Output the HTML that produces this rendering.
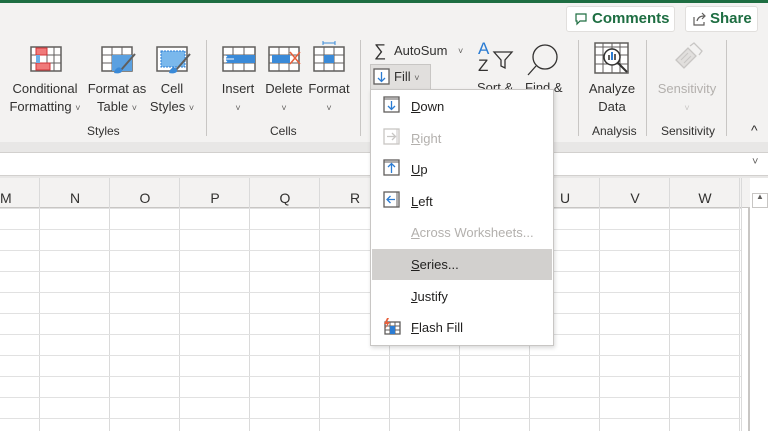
<!DOCTYPE html>
<html><head><style>
*{margin:0;padding:0;box-sizing:border-box}
body{width:768px;height:431px;overflow:hidden;background:#fff;font-family:"Liberation Sans",sans-serif;font-size:13px;color:#323130;position:relative}
.a{position:absolute}
.t{position:absolute;white-space:nowrap;font-size:13px;color:#323130}
.c{text-align:center}
.sep{position:absolute;width:1px;background:#c8c6c4;top:40px;height:96px}
.gl{position:absolute;top:124px;font-size:12px;color:#323130;white-space:nowrap}
.ch{position:absolute;top:190px;font-size:14px;color:#323130;width:70px;text-align:center}
.mi{position:absolute;left:411px;font-size:13px;color:#201f1e}
.dis{color:#b3b0ad}
.v{font-size:9px;color:#605e5c}
u{text-decoration:underline}
</style></head><body>
<div class="a" style="left:0;top:0;width:768px;height:3px;background:#1e6e42"></div>
<div class="a" style="left:0;top:3px;width:768px;height:139px;background:#f3f2f1"></div>
<div class="a" style="left:566px;top:6px;width:109px;height:26px;background:#fff;border:1px solid #e1dfdd;border-radius:3px"></div>
<svg class="a" style="left:574px;top:12px" width="14" height="14"><path d="M2 2h10v7H6l-3 3V9H2z" fill="none" stroke="#1e6e42" stroke-width="1.2"/></svg>
<div class="t" style="left:592px;top:10px;font-size:15px;font-weight:bold;color:#1e6e42">Comments</div>
<div class="a" style="left:685px;top:6px;width:73px;height:26px;background:#fff;border:1px solid #e1dfdd;border-radius:3px"></div>
<svg class="a" style="left:692px;top:12px" width="15" height="14"><path d="M2 5v8h10v-3M5 9c1-4 4-5 7-5M10 1l3 3-3 3" fill="none" stroke="#605e5c" stroke-width="1.2"/></svg>
<div class="t" style="left:710px;top:10px;font-size:15px;font-weight:bold;color:#1e6e42">Share</div>
<svg class="a" style="left:30px;top:46px" width="34" height="28"><rect x="1" y="1" width="30" height="24" fill="#fff" stroke="#605e5c" stroke-width="1.5"/><path d="M1 9h30M1 17h30M9 1v24M17 1v24M24 1v24" stroke="#605e5c"/><rect x="6" y="2" width="11" height="7" fill="#f07a7a" stroke="#d13438"/><rect x="6" y="17" width="14" height="7" fill="#f07a7a" stroke="#d13438"/><rect x="6" y="9" width="4" height="8" fill="#6cb0e8"/></svg>
<svg class="a" style="left:101px;top:46px" width="36" height="32"><rect x="1" y="1" width="30" height="24" fill="#fff" stroke="#605e5c" stroke-width="1.5"/><path d="M1 9h30M1 17h30M11 1v24M21 1v24" stroke="#605e5c"/><rect x="11" y="9" width="20" height="16" fill="#5aa0e0"/><path d="M34 8L20 24" stroke="#605e5c" stroke-width="2"/><path d="M14 24c3-4 6-3 7 0s-4 4-8 3z" fill="#3a8ad8"/></svg>
<svg class="a" style="left:156px;top:46px" width="36" height="32"><rect x="1" y="1" width="30" height="24" fill="#fff" stroke="#605e5c" stroke-width="1.5"/><rect x="5" y="5" width="24" height="16" fill="#7ab8ec" stroke="#2b7cd3" stroke-dasharray="2 1"/><path d="M34 8L20 24" stroke="#605e5c" stroke-width="2"/><path d="M14 24c3-4 6-3 7 0s-4 4-8 3z" fill="#3a8ad8"/></svg>
<div class="t c" style="left:5px;top:80px;width:80px;line-height:18px">Conditional<br>Formatting <span class="v">˅</span></div>
<div class="t c" style="left:86px;top:80px;width:62px;line-height:18px">Format as<br>Table <span class="v">˅</span></div>
<div class="t c" style="left:148px;top:80px;width:48px;line-height:18px">Cell<br>Styles <span class="v">˅</span></div>
<div class="gl" style="left:87px">Styles</div>
<div class="sep" style="left:206px"></div>
<svg class="a" style="left:222px;top:46px" width="36" height="28"><rect x="1" y="1" width="32" height="24" fill="#fff" stroke="#605e5c" stroke-width="1.5"/><path d="M1 9h32M1 17h32M11 1v24M22 1v24" stroke="#605e5c"/><rect x="4" y="9" width="29" height="8" fill="#3a8ad8"/><path d="M12 13H2M5 10l-3 3 3 3" stroke="#fff" fill="none"/></svg>
<svg class="a" style="left:268px;top:46px" width="36" height="28"><rect x="1" y="1" width="30" height="24" fill="#fff" stroke="#605e5c" stroke-width="1.5"/><path d="M1 9h30M1 17h30M11 1v24M21 1v24" stroke="#605e5c"/><rect x="4" y="9" width="18" height="8" fill="#3a8ad8"/><path d="M22 6l10 12M32 6L22 18" stroke="#e8603c" stroke-width="1.5"/></svg>
<svg class="a" style="left:313px;top:41px" width="34" height="33"><path d="M10 2h12M10 0v4M22 0v4" stroke="#3a8ad8"/><rect x="1" y="6" width="30" height="24" fill="#fff" stroke="#605e5c" stroke-width="1.5"/><path d="M1 14h30M1 22h30M11 6v24M21 6v24" stroke="#605e5c"/><rect x="11" y="14" width="10" height="8" fill="#3a8ad8"/></svg>
<div class="t c" style="left:218px;top:80px;width:40px;line-height:18px">Insert<br><span class="v">˅</span></div>
<div class="t c" style="left:262px;top:80px;width:44px;line-height:18px">Delete<br><span class="v">˅</span></div>
<div class="t c" style="left:306px;top:80px;width:46px;line-height:18px">Format<br><span class="v">˅</span></div>
<div class="gl" style="left:270px">Cells</div>
<div class="sep" style="left:360px"></div>
<div class="t" style="left:374px;top:41px;font-size:17px">∑</div>
<div class="t" style="left:394px;top:43px">AutoSum</div>
<div class="t v" style="left:458px;top:46px">˅</div>
<div class="a" style="left:370px;top:64px;width:61px;height:26px;background:#e1dfdd;border:1px solid #c8c6c4"></div>
<svg class="a" style="left:373px;top:68px" width="18" height="18"><rect x="1" y="1" width="15" height="15" fill="#fff" stroke="#605e5c" stroke-width="1.3"/><path d="M8.5 4v9M5 10l3.5 3.5L12 10" stroke="#2b7cd3" fill="none" stroke-width="1.3"/></svg>
<div class="t" style="left:394px;top:69px">Fill <span class="v">˅</span></div>
<div class="t" style="left:478px;top:40px;font-size:17px;color:#2b7cd3;line-height:17px">A</div>
<div class="t" style="left:478px;top:57px;font-size:17px;line-height:17px">Z</div>
<svg class="a" style="left:492px;top:50px" width="22" height="20"><path d="M2 2h18l-7 8v8l-4-2v-6z" fill="none" stroke="#323130" stroke-width="1.3"/></svg>
<svg class="a" style="left:526px;top:42px" width="38" height="36"><circle cx="19" cy="15" r="12" fill="none" stroke="#323130" stroke-width="1.3"/><path d="M10 24L2 33" stroke="#323130" stroke-width="1.3"/></svg>
<div class="t" style="left:477px;top:80px">Sort &amp;</div>
<div class="t" style="left:525px;top:80px">Find &amp;</div>
<div class="sep" style="left:578px"></div>
<svg class="a" style="left:594px;top:42px" width="38" height="36"><rect x="1" y="1" width="33" height="30" fill="#fff" stroke="#605e5c" stroke-width="1.5"/><path d="M1 5h33M1 13h33M1 22h33M9 1v30M18 1v30M26 1v30" stroke="#605e5c"/><circle cx="18" cy="15" r="8" fill="#fff" stroke="#323130" stroke-width="1.5"/><rect x="14" y="13" width="2" height="5" fill="#605e5c"/><rect x="17" y="10" width="2" height="8" fill="#2b7cd3"/><rect x="20" y="12" width="2" height="6" fill="#605e5c"/><path d="M24 21l9 9" stroke="#323130" stroke-width="2"/></svg>
<div class="t c" style="left:584px;top:80px;width:56px;line-height:18px">Analyze<br>Data</div>
<div class="gl" style="left:592px">Analysis</div>
<div class="sep" style="left:646px"></div>
<svg class="a" style="left:672px;top:42px" width="32" height="34"><path d="M4 18l12-12 8 8-12 12z" fill="#e1dfdd" stroke="#c8c6c4" stroke-width="1.3"/><path d="M18 4l4-3 8 8-3 4" fill="none" stroke="#c8c6c4" stroke-width="1.3"/><path d="M9 18l7-7M12 21l7-7" stroke="#c8c6c4"/></svg>
<div class="t c dis" style="left:652px;top:80px;width:70px;line-height:18px;color:#b3b0ad">Sensitivity<br><span class="v" style="color:#c8c6c4">˅</span></div>
<div class="gl" style="left:661px">Sensitivity</div>
<div class="sep" style="left:726px"></div>
<div class="t" style="left:751px;top:122px;font-size:14px">^</div>
<div class="a" style="left:0;top:142px;width:768px;height:36px;background:#e8e7e6"></div>
<div class="a" style="left:0;top:152px;width:768px;height:24px;background:#fff;border-top:1px solid #d2d0ce;border-bottom:1px solid #d2d0ce"></div>
<div class="t" style="left:752px;top:156px;font-size:11px;color:#605e5c">˅</div>
<div class="a" style="left:0;top:178px;width:750px;height:30px;background:#f3f2f1;border-bottom:1px solid #c8c6c4"></div>
<div class="ch" style="left:-30px;text-align:left;padding-left:30px">M</div>
<div class="ch" style="left:40px">N</div><div class="ch" style="left:110px">O</div><div class="ch" style="left:180px">P</div><div class="ch" style="left:250px">Q</div><div class="ch" style="left:320px">R</div><div class="ch" style="left:390px">S</div><div class="ch" style="left:460px">T</div><div class="ch" style="left:530px">U</div><div class="ch" style="left:600px">V</div><div class="ch" style="left:670px">W</div>
<div class="a" style="left:0;top:178px;width:742px;height:253px;background-image:linear-gradient(90deg,transparent 39px,#dadada 39px,#dadada 40px,transparent 40px),linear-gradient(90deg,transparent 69px,#dadada 69px);background-size:100% 100%,70px 100%;background-position:0 0,40px 0;background-repeat:no-repeat,repeat-x"></div>
<div class="a" style="left:0;top:208px;width:742px;height:223px;background-image:linear-gradient(180deg,transparent 20px,#e1e1e1 20px);background-size:100% 21px;background-position:0 1px"></div>
<div class="a" style="left:741px;top:178px;width:1px;height:253px;background:#dadada"></div>
<div class="a" style="left:748px;top:208px;width:20px;height:223px;background:#fff;border-left:2px solid #c8c6c4"></div>
<div class="a" style="left:752px;top:193px;width:16px;height:15px;background:#fff;border:1px solid #c8c6c4"></div>
<div class="t" style="left:756px;top:192px;font-size:8px;color:#605e5c">▲</div>
<div class="a" style="left:370px;top:89px;width:184px;height:257px;background:#fff;border:1px solid #c8c6c4;box-shadow:1px 2px 4px rgba(0,0,0,.15)"></div>
<div class="a" style="left:372px;top:249px;width:180px;height:31px;background:#d2d0ce"></div>
<svg class="a" style="left:383px;top:96px" width="18" height="18"><rect x="1" y="1" width="15" height="15" fill="#fff" stroke="#605e5c" stroke-width="1.3"/><path d="M1 3h15" stroke="#605e5c"/><path d="M8.5 5v8M5 10l3.5 3.5L12 10" stroke="#2b7cd3" fill="none" stroke-width="1.3"/></svg>
<svg class="a" style="left:383px;top:128px" width="18" height="18"><rect x="1" y="1" width="15" height="15" fill="#fff" stroke="#c8c6c4" stroke-width="1.3"/><path d="M14 1v15" stroke="#c8c6c4"/><path d="M4 8.5h8M9 5l3.5 3.5L9 12" stroke="#c8c6c4" fill="none" stroke-width="1.3"/></svg>
<svg class="a" style="left:383px;top:159px" width="18" height="18"><rect x="1" y="1" width="15" height="15" fill="#fff" stroke="#605e5c" stroke-width="1.3"/><path d="M1 3h15" stroke="#605e5c"/><path d="M8.5 14V5M5 8l3.5-3.5L12 8" stroke="#2b7cd3" fill="none" stroke-width="1.3"/></svg>
<svg class="a" style="left:383px;top:191px" width="18" height="18"><rect x="1" y="1" width="15" height="15" fill="#fff" stroke="#605e5c" stroke-width="1.3"/><path d="M14 1v15" stroke="#605e5c"/><path d="M12 8.5H4M7.5 5L4 8.5 7.5 12" stroke="#2b7cd3" fill="none" stroke-width="1.3"/></svg>
<svg class="a" style="left:383px;top:317px" width="20" height="18"><rect x="2" y="5" width="15" height="12" fill="#fff" stroke="#605e5c" stroke-width="1.3"/><path d="M2 9h15M2 13h15M7 5v12M12 5v12" stroke="#605e5c"/><rect x="7" y="9" width="5" height="8" fill="#2b7cd3"/><path d="M4 1l-3 6h3l-2 5 5-7H4l2-4z" fill="#e8603c"/></svg>
<div class="mi" style="top:99px"><u>D</u>own</div>
<div class="mi dis" style="top:131px"><u>R</u>ight</div>
<div class="mi" style="top:162px"><u>U</u>p</div>
<div class="mi" style="top:194px"><u>L</u>eft</div>
<div class="mi dis" style="top:225px"><u>A</u>cross Worksheets...</div>
<div class="mi" style="top:257px"><u>S</u>eries...</div>
<div class="mi" style="top:289px"><u>J</u>ustify</div>
<div class="mi" style="top:320px"><u>F</u>lash Fill</div>
</body></html>
